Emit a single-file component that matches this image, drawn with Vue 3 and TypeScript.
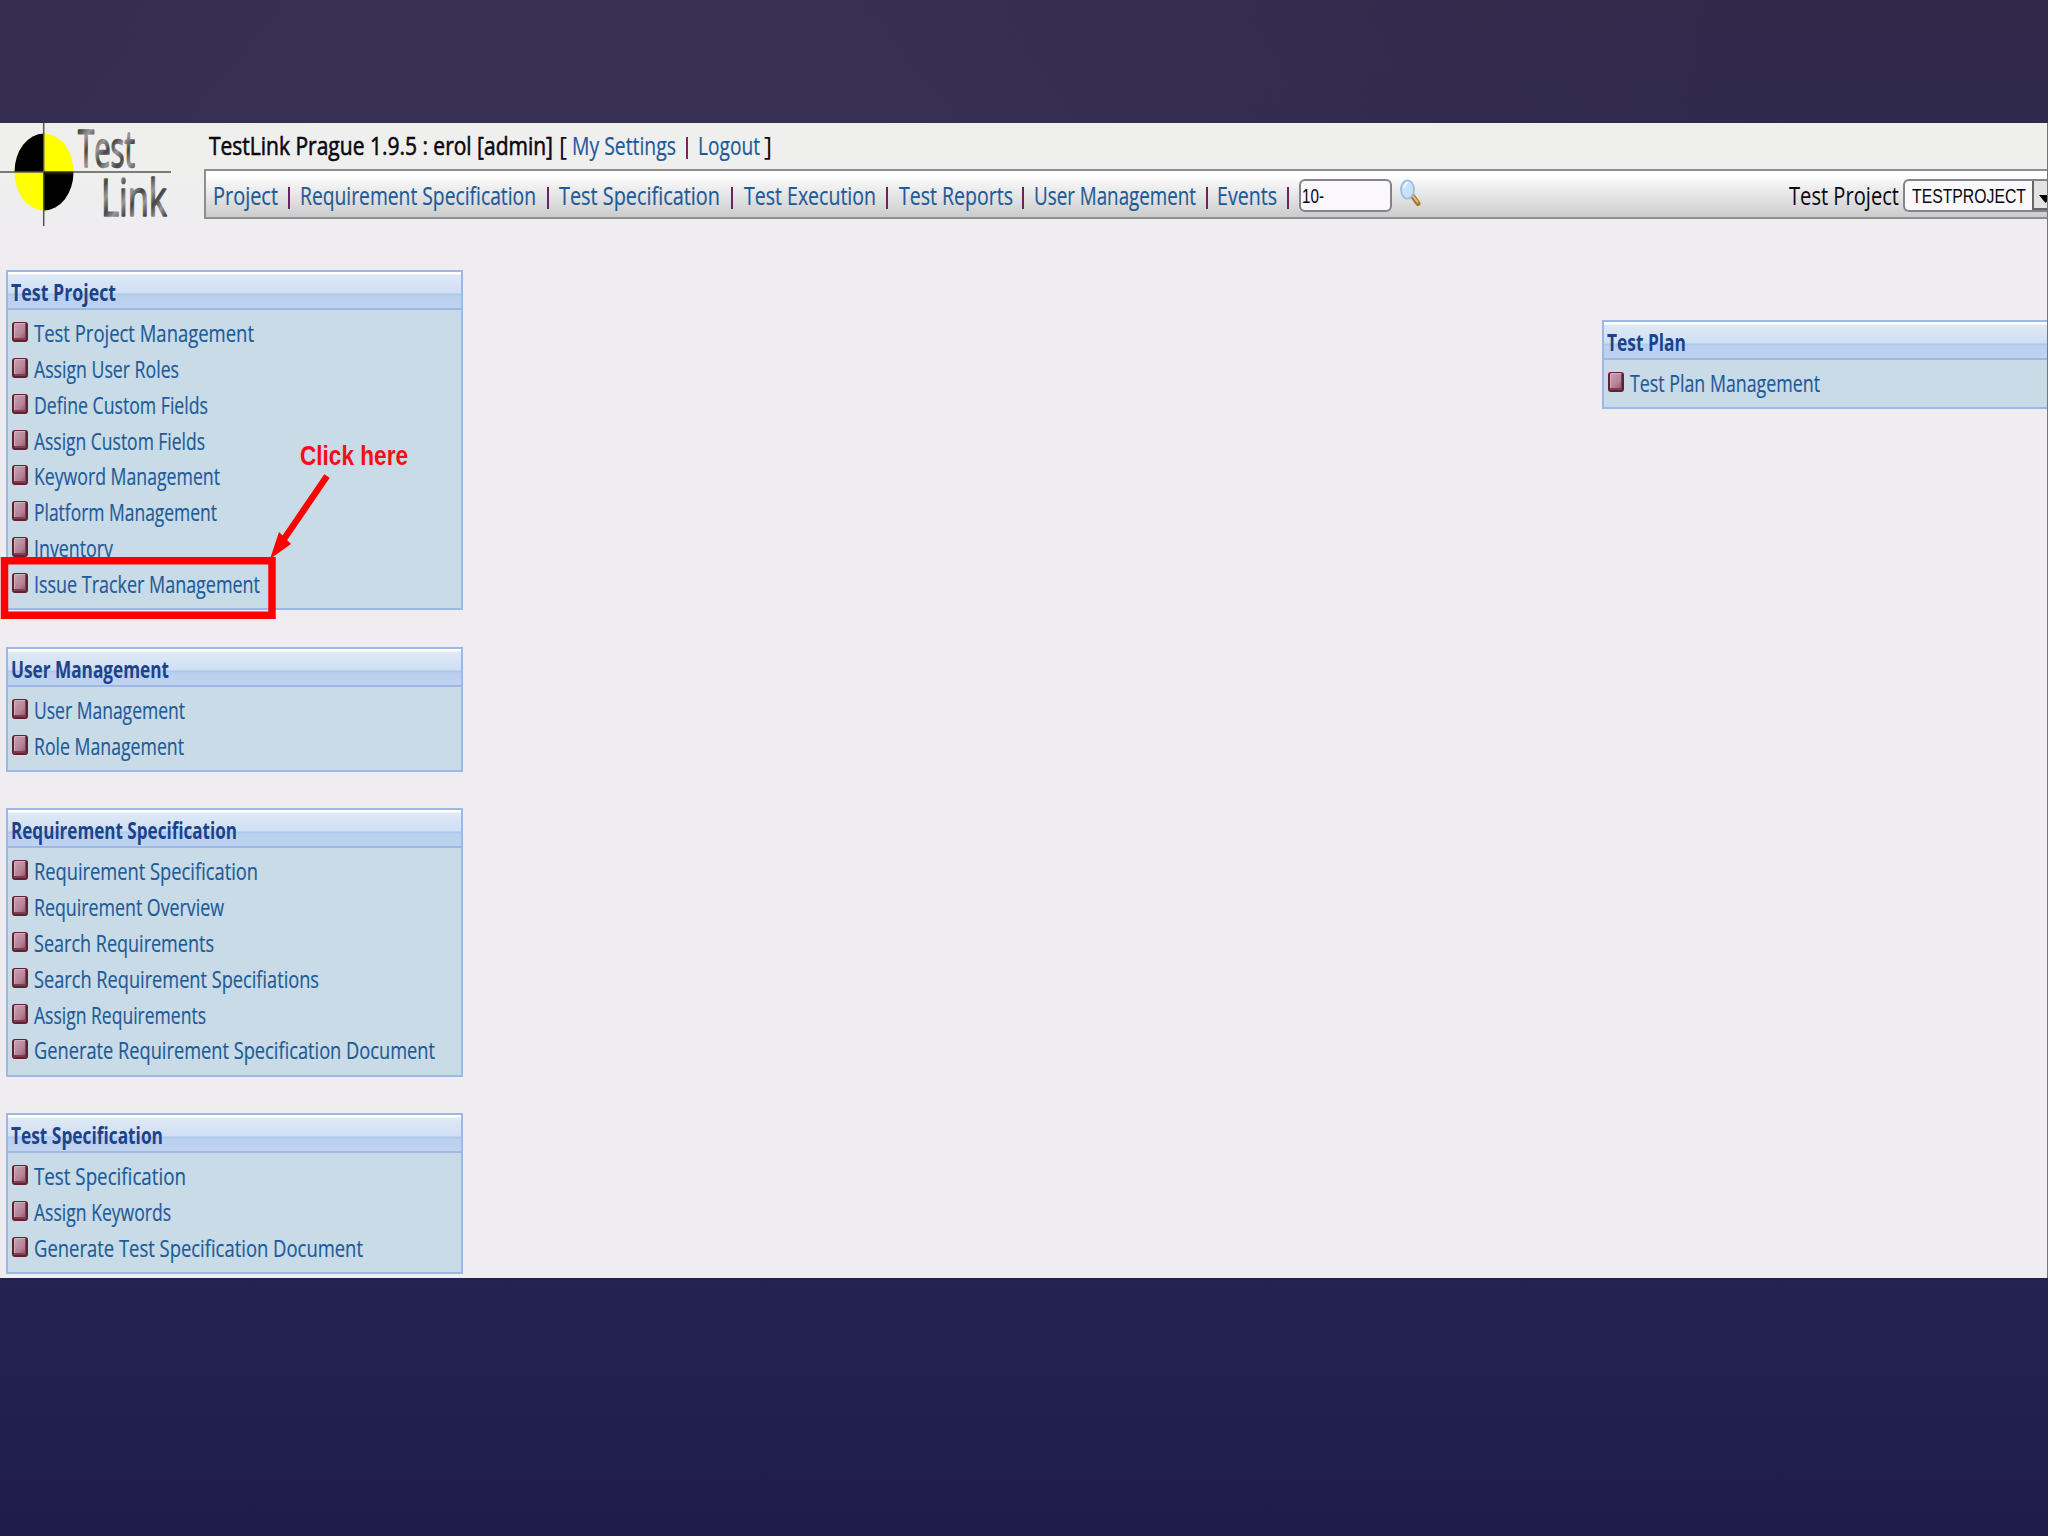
<script setup lang="ts">
import { h, type FunctionalComponent } from 'vue'

interface FitProps { text: string; w: number; size?: number; bold?: boolean; face?: string }

// Text condensed to a fixed width, with its baseline 26px below the top of the box.
const Fit: FunctionalComponent<FitProps> = (p) =>
  h('svg', { class: ['fit', { 'fit-bold': p.bold }], width: p.w, height: 34 }, [
    h('text', {
      x: 0, y: 26, textLength: p.w, lengthAdjust: 'spacingAndGlyphs',
      style: { fontSize: (p.size ?? 25) + 'px', fontFamily: p.face },
    }, p.text),
  ])
Fit.props = ['text', 'w', 'size', 'bold', 'face']

type Item = [string, number]
interface Panel { title: Item; items: Item[] }

const menu: Item[] = [
  ['Project', 65], ['Requirement Specification', 236], ['Test Specification', 161],
  ['Test Execution', 132], ['Test Reports', 114], ['User Management', 162], ['Events', 60],
]
const menuGap: number[] = [22, 23, 23.5, 23, 21.5, 21, 22]

const left: Panel[] = [
  { title: ['Test Project', 105], items: [
    ['Test Project Management', 220], ['Assign User Roles', 145], ['Define Custom Fields', 174],
    ['Assign Custom Fields', 171], ['Keyword Management', 186], ['Platform Management', 183],
    ['Inventory', 79], ['Issue Tracker Management', 226],
  ] },
  { title: ['User Management', 158], items: [['User Management', 151], ['Role Management', 150]] },
  { title: ['Requirement Specification', 226], items: [
    ['Requirement Specification', 224], ['Requirement Overview', 190], ['Search Requirements', 180],
    ['Search Requirement Specifiations', 285], ['Assign Requirements', 172],
    ['Generate Requirement Specification Document', 401],
  ] },
  { title: ['Test Specification', 152], items: [
    ['Test Specification', 152], ['Assign Keywords', 137], ['Generate Test Specification Document', 329],
  ] },
]
const right: Panel[] = [{ title: ['Test Plan', 79], items: [['Test Plan Management', 190]] }]
const columns = [{ name: 'left', panels: left }, { name: 'right', panels: right }]
</script>

<template>
  <div class="slide">
    <main class="page">
      <header class="top">
        <svg class="logo" width="180" height="106" viewBox="0 0 180 106">
          <defs>
            <linearGradient id="metal" x1="0" y1="0" x2="7" y2="5" gradientUnits="userSpaceOnUse" spreadMethod="reflect">
              <stop offset="0" stop-color="#444" /><stop offset="1" stop-color="#999" />
            </linearGradient>
          </defs>
          <ellipse cx="44" cy="49" rx="29.5" ry="38.5" fill="#ff0" />
          <path d="M44 49V10.5A29.5 38.5 0 0 0 14.500 49ZM44 49V87.500A29.500 38.500 0 0 0 73.500 49Z" fill="#000" />
          <path d="M43.700 0V103M0 49H171" stroke="#555" stroke-width="1.500" />
          <path d="M44 50H73" stroke="#222200" stroke-width="2.500" />
          <g class="word">
            <text x="78" y="43.500" textLength="57" lengthAdjust="spacingAndGlyphs">Test</text>
            <text x="101" y="92.500" textLength="66" lengthAdjust="spacingAndGlyphs">Link</text>
          </g>
        </svg>
        <div class="head">
          <div class="user">
            <Fit class="black strong" text="TestLink Prague 1.9.5 : erol [admin]" :w="344" :size="25.500" />
            <Fit class="black brace" text="[" :w="8" />
            <Fit class="link" text="My Settings" :w="104" />
            <i class="bar" />
            <Fit class="link" text="Logout" :w="62" />
            <Fit class="black close" text="]" :w="8" />
          </div>
          <nav class="menu">
            <template v-for="(m, i) in menu" :key="m[0]">
              <Fit class="link" :text="m[0]" :w="m[1]" />
              <span class="gap" :style="{ width: menuGap[i] + 'px' }"><i /></span>
            </template>
            <div class="field"><Fit class="black" text="10-" :w="22" :size="20" face="Liberation Sans" /></div>
            <svg class="search" width="22" height="28" viewBox="0 0 22 28">
              <path d="M12.500 17L18 24.500" stroke="#a87532" stroke-width="5" stroke-linecap="round" />
              <path d="M13 17L17.500 23" stroke="#e8bb77" stroke-width="2" stroke-linecap="round" />
              <ellipse cx="7.500" cy="10.500" rx="6.500" ry="9.200" fill="#c8e2fa" stroke="#9dbce6" stroke-width="1.800" />
              <path d="M4 9Q5 4 8 4" stroke="#eaf6ff" stroke-width="2" fill="none" />
            </svg>
            <Fit class="black project" text="Test Project" :w="110" />
            <div class="select">
              <Fit class="black" text="TESTPROJECT" :w="114" :size="20" face="Liberation Sans" />
              <span class="arrow"><svg width="14" height="26"><path d="M5 14H18L11.500 22Z" fill="#000" /></svg></span>
            </div>
          </nav>
        </div>
      </header>

      <div class="body">
        <div v-for="c in columns" :key="c.name" :class="['col', c.name]">
          <section v-for="p in c.panels" :key="p.title[0]" class="panel">
            <h2><Fit :text="p.title[0]" :w="p.title[1]" :size="22.500" bold /></h2>
            <ul>
              <li v-for="it in p.items" :key="it[0]">
                <span class="bullet" /><Fit class="link" :text="it[0]" :w="it[1]" :size="24.500" />
              </li>
            </ul>
          </section>
        </div>
      </div>

      <svg class="callout" width="420" height="200" viewBox="0 0 420 200">
        <rect x="4.500" y="131.750" width="267.500" height="54.500" fill="none" stroke="#f00" stroke-width="7.500" />
        <path d="M327 47L284 110" stroke="#f00" stroke-width="6.500" />
        <path d="M270 130L279 103L284 108L291 115Z" fill="#f00" />
        <text x="300" y="36" textLength="108" lengthAdjust="spacingAndGlyphs">Click here</text>
      </svg>
    </main>
  </div>
</template>

<style>
body { margin: 0; overflow: hidden; }
.fit { display: block; flex: none; overflow: visible; }
.fit text { font-family: "Open Sans", "Noto Sans", sans-serif; fill: currentColor; white-space: pre; }
.fit-bold text { font-weight: 700; }
</style>

<style scoped>
.slide {
  width: 2048px; height: 1536px; box-sizing: border-box; padding-top: 123px; overflow: hidden;
  background: radial-gradient(ellipse 1200px 950px at 28% 20%, rgba(68, 58, 94, .6), transparent),
    linear-gradient(#30294a 0, #2b2750 30%, #24234f 84%, #1f1c49 100%);
}
.page { position: relative; height: 1155px; overflow: hidden; background: #efedf0; }
.page::after {
  content: ""; position: absolute; top: 0; right: 0; bottom: 0; width: 1px; background: #77757c;
}
.top { display: flex; height: 106px; background: linear-gradient(#efefee 50%, #efedf0); }
.logo { flex: none; width: 180px; overflow: visible; }
.word text {
  font: 400 52px "Open Sans", sans-serif;
  fill: url(#metal); stroke: url(#metal); stroke-width: 1.6; stroke-linejoin: round;
}
.head { flex: 1; padding-left: 24px; }
.user { display: flex; height: 46px; padding: 6px 0 0 5px; box-sizing: border-box; }
.black { color: #0b0710; }
.link { color: #1d5a99; stroke: currentColor; stroke-width: .2px; }
.strong { stroke: currentColor; stroke-width: .6px; }
.brace { margin: 0 5px 0 6px; }
.bar { width: 2px; height: 22px; margin: 8px 10px 0; background: #7b2468; }
.close { margin-left: 4px; }
.menu {
  display: flex; height: 50px; box-sizing: border-box; padding: 8px 0 0 7px;
  border: 2px solid #8e8e8e; border-right: 0;
  background: linear-gradient(#fff 10%, #f3f2f2 30%, #ccc 100%);
}
.gap { display: flex; justify-content: center; flex: none; }
.gap i { width: 2px; height: 22px; margin-top: 8px; background: #6b2364; }
.field {
  width: 93px; height: 33px; box-sizing: border-box; border: 2px solid #858387; border-radius: 6px;
  background: #faf8fb; padding: 0 0 0 1px; flex: none;
}
.field .fit, .select .fit { margin-top: -4px; }
.search { flex: none; margin-left: 8px; }
.project { margin-left: auto; }
.select {
  display: flex; width: 145px; height: 33px; margin-left: 4px; box-sizing: border-box; flex: none;
  border: 2px solid #858387; border-right: 0; border-radius: 6px 0 0 6px; background: #f9f9fb; padding-left: 7px;
}
.arrow {
  margin-left: 6px; flex: 1; border-left: 2px solid #666; border-bottom: 2px solid #666;
  background: #e3e3e3; height: 27px; overflow: hidden;
}
.body { display: flex; justify-content: space-between; }
.col { display: flex; flex-direction: column; gap: 36.300px; padding-top: 41px; }
.left { width: 457px; padding-left: 6px; }
.right { width: 446px; padding-top: 91px; }
.panel { border: 2px solid #9bb9e4; background: #c8dbe7; box-sizing: border-box; }
.right .panel { border-right: 0; }
h2 {
  margin: 0; height: 38px; box-sizing: border-box; border-bottom: 2px solid #9bb9e4; padding: 3px 0 0 3px;
  color: #1b438b; background: linear-gradient(#fff 0 2px, #dfe9f6 3px, #cfdff4 21px, #a9c6e8 22px, #b9d0ee 24px, #c0d3f1 100%);
}
ul { list-style: none; margin: 0; padding: 6px 0 5.500px 4px; }
li { display: flex; height: 35.860px; }
.bullet {
  width: 16px; height: 20px; box-sizing: border-box; margin: 6px 6px 0 0; flex: none; border-radius: 3px;
  border: 2px solid #64202e; border-top-width: 1.500px;
  background: linear-gradient(135deg, #c9a3b5, #b58298 60%, #8f5064);
  box-shadow: inset -1px -2px #7c4053, inset 1px 1px #d3b0c0;
}
.callout { position: absolute; left: 0; top: 306px; }
.callout text { font: 700 27px "Liberation Sans", sans-serif; fill: #f50d18; }
</style>
